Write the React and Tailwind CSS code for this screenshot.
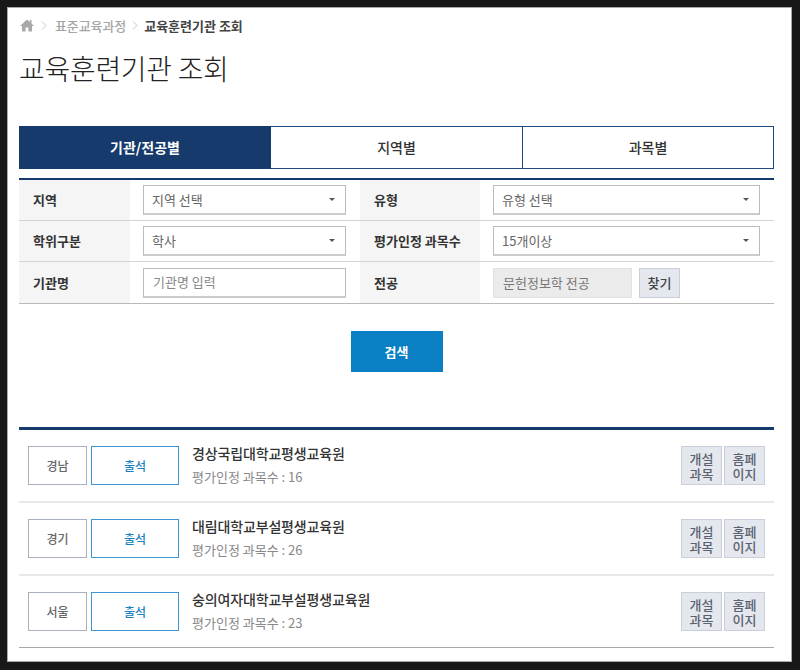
const rows = [
  ["경남", "경상국립대학교평생교육원", "16"],
  ["경기", "대림대학교부설평생교육원", "26"],
  ["서울", "숭의여자대학교부설평생교육원", "23"],
];

function Caret() {
  return <span className="ml-auto w-0 h-0 border-x-[3px] border-x-transparent border-t-[3px] border-t-[#555]" />;
}

function Select({ children }) {
  return (
    <div className="w-full h-[30px] flex items-center pl-2 pr-[10px] bg-white border border-[#bbb] border-b-2 border-b-[#ccc] text-[13px] text-[#666]">
      <span>{children}</span>
      <Caret />
    </div>
  );
}

function Label({ children, w }) {
  return (
    <div className={`${w} shrink-0 h-full flex items-center pl-[14px] bg-[#f5f5f5] text-[13px] font-bold text-[#333]`}>
      {children}
    </div>
  );
}

function FormRow({ children, h, border }) {
  return <div className={`flex items-center ${h} ${border}`}>{children}</div>;
}

function Cell({ w, children, pr }) {
  return <div className={`${w} shrink-0 flex items-center pl-[13px] ${pr}`}>{children}</div>;
}

function SmallBtn({ children }) {
  return (
    <div className="w-[41px] h-[39px] flex items-center justify-center bg-[#e4e7ee] border border-[#c9ced8] text-center text-[13px] leading-[15px] font-medium text-[#5a6270]">
      <p className="w-[28px]">{children}</p>
    </div>
  );
}

export default function App() {
  return (
    <div
      className="w-[800px] h-[670px] bg-[#181818] pl-[7px] pr-[8px] pt-[7px] pb-[8px] overflow-hidden"
      style={{ fontFamily: '"Noto Sans CJK KR", "Noto Sans", sans-serif' }}
    >
      <div className="h-full bg-white border border-[#aaa] pl-[11px] pr-[17px]">
        <div className="flex items-center h-[19px] mt-[8px] pl-[1px] text-[13px]">
          <svg width="14" height="13" viewBox="0 0 14 13" className="fill-[#a9a9a9]">
            <path d="M7 0.5 L0 7 H2 V12.5 H5.6 V8.5 H8.4 V12.5 H12 V7 H14 L11.5 4.6 V1 H9.8 V3 Z" />
          </svg>
          <svg width="6" height="9" viewBox="0 0 6 9" className="ml-[7px] stroke-[#c4c4c4] fill-none">
            <path d="M1 0.5 L5 4.5 L1 8.5" />
          </svg>
          <span className="ml-[8px] text-[#a5a5a5] font-medium tracking-[-0.1px]">표준교육과정</span>
          <svg width="6" height="9" viewBox="0 0 6 9" className="ml-[6px] stroke-[#c4c4c4] fill-none">
            <path d="M1 0.5 L5 4.5 L1 8.5" />
          </svg>
          <span className="ml-[6px] text-[#444] font-bold">교육훈련기관 조회</span>
        </div>

        <h1 className="mt-[13px] h-[40px] leading-[40px] text-[28px] font-light text-[#222] tracking-[-0.3px]">
          교육훈련기관 조회
        </h1>

        <div className="mt-[38px] flex h-[43px] text-[14px]">
          <div className="w-[252px] flex items-center justify-center bg-[#153a6b] text-white font-bold">기관/전공별</div>
          <div className="w-[252px] flex items-center justify-center border-y border-r border-[#1d4a80] text-[#333] font-medium">지역별</div>
          <div className="w-[251px] flex items-center justify-center border-y border-r border-[#1d4a80] text-[#333] font-medium">과목별</div>
        </div>

        <div className="mt-[9px] border-t-2 border-[#153a6b] w-[755px]">
          <FormRow h="h-[41px]" border="border-b border-[#d5d5d5]">
            <Label w="w-[111px]">지역</Label>
            <Cell w="w-[230px]" pr="pr-[14px]"><Select>지역 선택</Select></Cell>
            <Label w="w-[120px]">유형</Label>
            <Cell w="w-[294px]" pr="pr-[14px]"><Select>유형 선택</Select></Cell>
          </FormRow>
          <FormRow h="h-[41px]" border="border-b border-[#d5d5d5]">
            <Label w="w-[111px]">학위구분</Label>
            <Cell w="w-[230px]" pr="pr-[14px]"><Select>학사</Select></Cell>
            <Label w="w-[120px]">평가인정 과목수</Label>
            <Cell w="w-[294px]" pr="pr-[14px]"><Select>15개이상</Select></Cell>
          </FormRow>
          <FormRow h="h-[42px]" border="border-b border-[#b9b9b9]">
            <Label w="w-[111px]">기관명</Label>
            <Cell w="w-[230px]" pr="pr-[14px]">
              <div className="w-full h-[30px] flex items-center pl-[9px] bg-white border border-[#bbb] border-b-2 border-b-[#ccc] text-[13px] text-[#888]">
                기관명 입력
              </div>
            </Cell>
            <Label w="w-[120px]">전공</Label>
            <Cell w="w-[294px]">
              <div className="w-[139px] h-[30px] flex items-center pl-[9px] bg-[#ebebeb] border border-[#e2e2e2] text-[13px] text-[#777]">
                문헌정보학 전공
              </div>
              <div className="ml-[7px] w-[41px] h-[30px] flex items-center justify-center bg-[#e4e7ee] border border-[#c9ced8] text-[13px] font-medium text-[#444]">
                찾기
              </div>
            </Cell>
          </FormRow>
        </div>

        <div className="mt-[27px] flex justify-center w-[755px]">
          <div className="w-[92px] h-[41px] flex items-center justify-center bg-[#0b7fc4] text-white text-[13px] font-bold">
            검색
          </div>
        </div>

        <div className="mt-[55px] w-[755px] border-t-[3px] border-[#153a6b]">
          {rows.map(([region, name, count], i) => (
            <div
              key={region}
              className={`pl-[9px] pr-[9px] flex items-center ${i === 2 ? "h-[72px] border-b border-[#a8a8a8]" : "h-[73px] border-b-2 border-[#e8e8e8]"}`}
            >
              <div className="w-[59px] h-[39px] flex items-center justify-center border border-[#a9b0bb] text-[12px] font-medium text-[#666]">
                {region}
              </div>
              <div className="ml-[4px] w-[88px] h-[39px] flex items-center justify-center border border-[#3a97d2] text-[12px] font-medium text-[#1b80c0]">
                출석
              </div>
              <div className="ml-[13px] flex flex-col -mt-[2px]">
                <span className="text-[14px] leading-[20px] font-medium text-[#333] tracking-[-0.15px]">{name}</span>
                <span className="mt-[5px] text-[13px] leading-[18px] text-[#888]">평가인정 과목수 : {count}</span>
              </div>
              <div className="ml-auto flex gap-[2px]">
                <SmallBtn>개설 과목</SmallBtn>
                <SmallBtn>홈페 이지</SmallBtn>
              </div>
            </div>
          ))}
        </div>
      </div>
    </div>
  );
}
